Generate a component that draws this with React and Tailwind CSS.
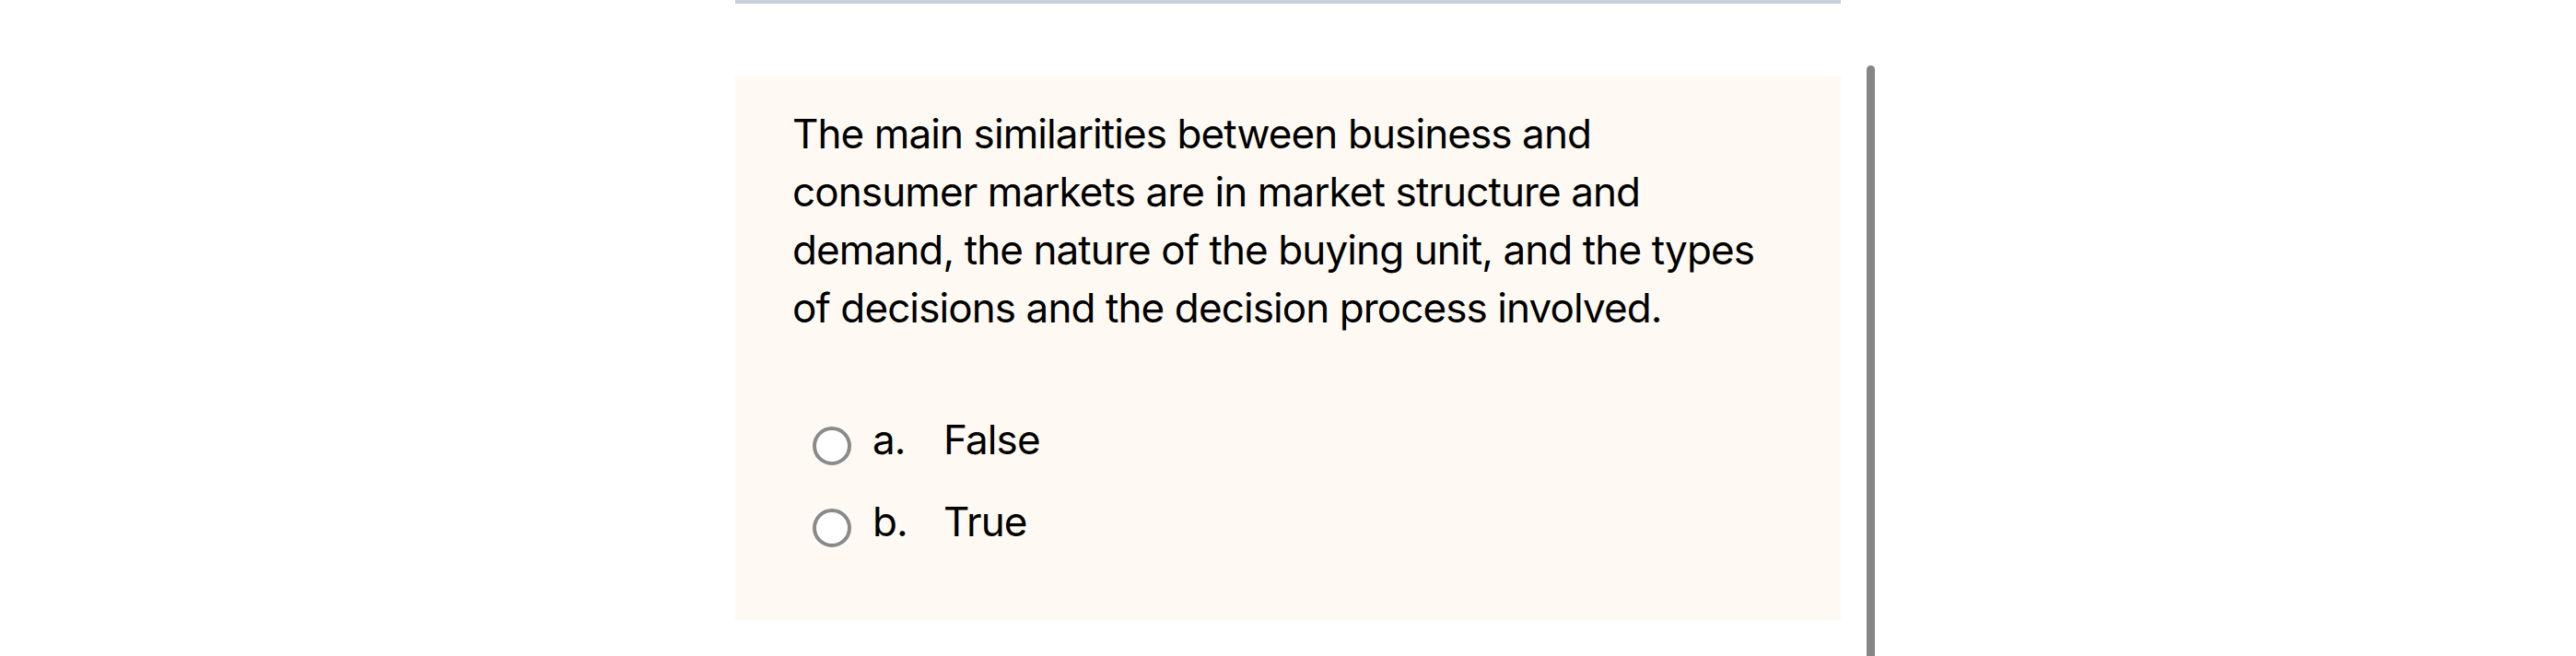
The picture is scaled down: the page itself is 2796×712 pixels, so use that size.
const options = [
  { key: "a.", text: "False" },
  { key: "b.", text: "True" },
];

export default function App() {
  return (
    <div
      className="min-h-screen bg-white text-black"
      style={{ fontFamily: "Inter, 'Noto Sans', sans-serif" }}
    >
      <div className="relative mx-auto w-[1200px]">
        <div className="h-[4px] bg-[#c9d1da]" />

        <div className="mt-[78px] bg-[#fefaf3] px-[62px] pt-[32px] pb-[75px] tracking-[-0.9px]">
          <p className="max-w-[1080px] text-[44px] leading-[63px]">
            The main similarities between business and consumer markets are in
            market structure and demand, the nature of the buying unit, and the
            types of decisions and the decision process involved.
          </p>

          <div className="mt-[80px] flex flex-col gap-[26px]">
            {options.map((opt) => (
              <label key={opt.key} className="flex items-start">
                <span className="ml-[22px] mt-[17px] h-[42px] w-[42px] shrink-0 rounded-full border-[4px] border-[#8a8a8a] bg-white" />
                <span className="ml-[23px] w-[77px] text-[44px] leading-[63px]">
                  {opt.key}
                </span>
                <span className="text-[44px] leading-[63px]">{opt.text}</span>
              </label>
            ))}
          </div>
        </div>

        {/* scroll thumb */}
        <div className="absolute right-[-37px] top-[71px] h-[641px] w-[9px] rounded-t-full bg-[#868686]" />
      </div>
    </div>
  );
}
